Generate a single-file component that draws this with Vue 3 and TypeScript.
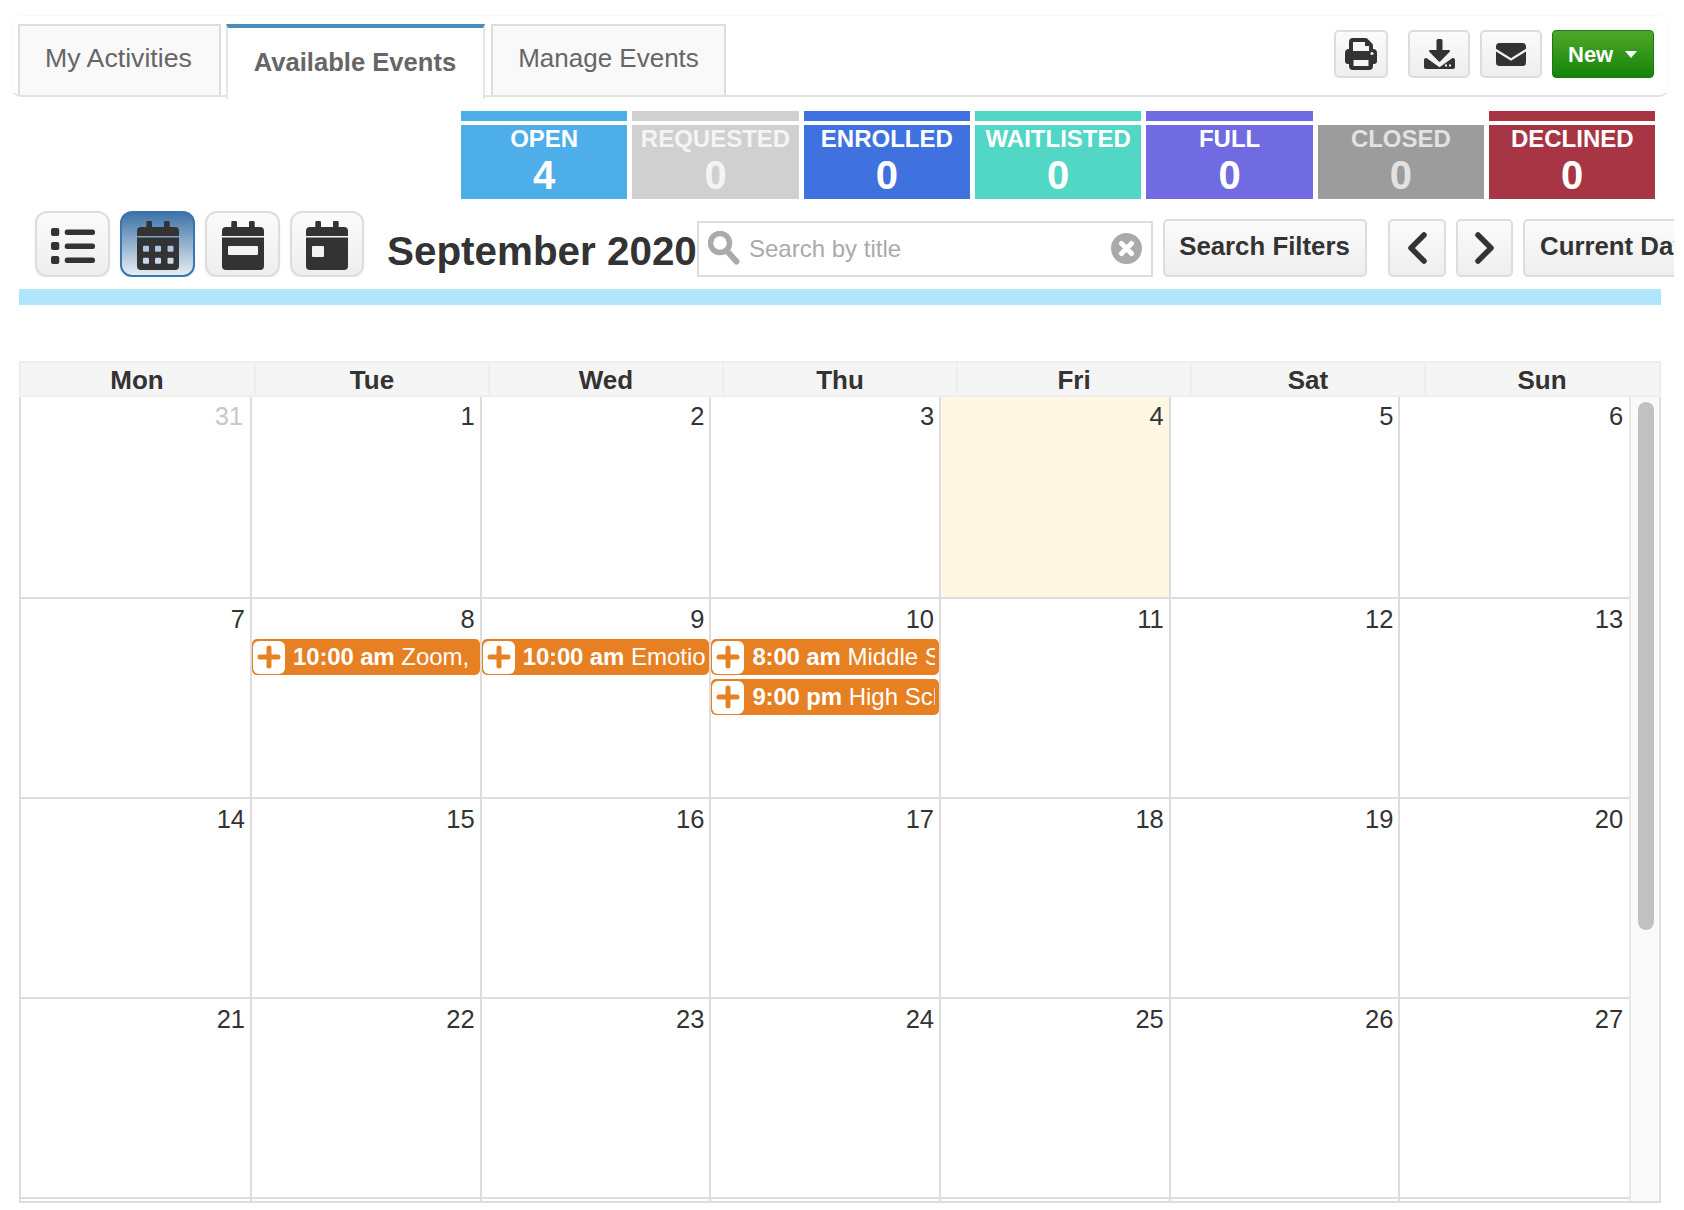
<script setup lang="ts">
interface Tile { label: string; count: number; color: string; strip: string; text: string }
interface Ev { time: string; title: string }
interface Cell { day: number; muted?: boolean; today?: boolean; events?: Ev[] }

const tiles: Tile[] = [
  { label: 'OPEN', count: 4, color: '#4daeea', strip: '#4daeea', text: '#ffffff' },
  { label: 'REQUESTED', count: 0, color: '#d0d0d0', strip: '#d0d0d0', text: '#f4f4f4' },
  { label: 'ENROLLED', count: 0, color: '#3f72de', strip: '#3f72de', text: '#ffffff' },
  { label: 'WAITLISTED', count: 0, color: '#52d6c6', strip: '#52d6c6', text: '#ffffff' },
  { label: 'FULL', count: 0, color: '#706be0', strip: '#706be0', text: '#ffffff' },
  { label: 'CLOSED', count: 0, color: '#9c9c9c', strip: '#ffffff', text: '#e2e2e2' },
  { label: 'DECLINED', count: 0, color: '#a73543', strip: '#a73543', text: '#ffffff' },
]

const dayNames = ['Mon', 'Tue', 'Wed', 'Thu', 'Fri', 'Sat', 'Sun']

const eventsByDay: Record<number, Ev[]> = {
  8: [{ time: '10:00 am', title: 'Zoom,' }],
  9: [{ time: '10:00 am', title: 'Emotional Health' }],
  10: [
    { time: '8:00 am', title: 'Middle School' },
    { time: '9:00 pm', title: 'High School' },
  ],
}

const cells: Cell[] = [{ day: 31, muted: true }]
for (let d = 1; d <= 30; d++) {
  cells.push({ day: d, today: d === 4, events: eventsByDay[d] })
}
for (let d = 1; d <= 4; d++) {
  cells.push({ day: d, muted: true })
}
const weeks: Cell[][] = []
for (let i = 0; i < 35; i += 7) weeks.push(cells.slice(i, i + 7))
</script>

<template>
  <div class="page">
    <header class="tabbar">
      <nav class="tabs">
        <div class="tab tab-first">My Activities</div>
        <div class="tab tab-active">Available Events</div>
        <div class="tab tab-last">Manage Events</div>
      </nav>
      <div class="actions">
        <button class="btn act act-print" aria-label="Print">
          <svg width="32" height="32" viewBox="0 0 32 32">
            <path fill="#333" d="M8 0h12.500a3 3 0 0 1 2 .8l4.600 4.600a3 3 0 0 1 .9 2.100V11a4 4 0 0 1 4 4v8a3 3 0 0 1-3 3h-1v2a4 4 0 0 1-4 4H8a4 4 0 0 1-4-4v-2H3a3 3 0 0 1-3-3v-8a4 4 0 0 1 4-4V4a4 4 0 0 1 4-4z"/>
            <path fill="#f6f6f6" d="M8 4h12v4h4v5H8zM8.500 22h15v6h-15z"/>
            <circle cx="27" cy="15.500" r="1.600" fill="#f6f6f6"/>
          </svg>
        </button>
        <button class="btn act act-down" aria-label="Download">
          <svg width="31" height="30" viewBox="0 0 31 30">
            <rect x="0" y="19" width="31" height="11" rx="2" fill="#333"/>
            <path d="M2 17.500 15.500 27 29 17.500" fill="#f4f4f4" stroke="#f4f4f4" stroke-width="2"/>
            <path fill="#333" d="M12.500 1.500A1.500 1.500 0 0 1 14 0h3a1.500 1.500 0 0 1 1.500 1.500V11H25a1 1 0 0 1 .7 1.700l-9.500 9.800a1 1 0 0 1-1.400 0l-9.500-9.800A1 1 0 0 1 6 11h6.500z"/>
            <rect x="21" y="25.500" width="2" height="2" fill="#f4f4f4"/>
            <rect x="25" y="25.500" width="2" height="2" fill="#f4f4f4"/>
          </svg>
        </button>
        <button class="btn act act-mail" aria-label="Email">
          <svg width="30" height="23" viewBox="0 0 30 23">
            <rect width="30" height="23" rx="3.500" fill="#333"/>
            <path d="M-1 6.500 15 16.500 31 6.500" fill="none" stroke="#f4f4f4" stroke-width="2.200"/>
          </svg>
        </button>
        <button class="btn-new"><span class="new-label">New</span><span class="caret"></span></button>
      </div>
    </header>

    <section class="statuses">
      <div v-for="t in tiles" :key="t.label" class="tile">
        <div class="strip" :style="{ background: t.strip }"></div>
        <div class="tile-body" :style="{ background: t.color, color: t.text }">
          <div class="tile-label">{{ t.label }}</div>
          <div class="tile-count">{{ t.count }}</div>
        </div>
      </div>
    </section>

    <section class="toolbar">
      <button class="btn view" aria-label="List">
        <svg width="44" height="36" viewBox="0 0 44 36" fill="#333">
          <rect width="8.300" height="8" rx="2"/><rect y="14" width="8.300" height="8" rx="2"/><rect y="28" width="8.300" height="8" rx="2"/>
          <rect x="13.700" y="1.500" width="30.300" height="5.500" rx="2.500"/><rect x="13.700" y="15.500" width="30.300" height="5.500" rx="2.500"/><rect x="13.700" y="29.500" width="30.300" height="5.500" rx="2.500"/>
        </svg>
      </button>
      <button class="btn view view-on" aria-label="Month">
        <svg width="42" height="49" viewBox="0 0 42 49" fill="#333">
          <path d="M9.300 6V2a2.800 2.800 0 0 1 5.700 0v4h12V2a2.800 2.800 0 0 1 5.700 0v4H38a4 4 0 0 1 4 4v5H0v-5a4 4 0 0 1 4-4z"/>
          <path d="M0 16.500h42V45a4 4 0 0 1-4 4H4a4 4 0 0 1-4-4z"/>
          <g fill="#a9c6e2">
            <rect x="6" y="24.700" width="6" height="6" rx="1"/><rect x="18" y="24.700" width="6" height="6" rx="1"/><rect x="30.500" y="24.700" width="6" height="6" rx="1"/>
          </g>
          <g fill="#c9d9ea">
            <rect x="6" y="36.700" width="6" height="6" rx="1"/><rect x="18" y="36.700" width="6" height="6" rx="1"/><rect x="30.500" y="36.700" width="6" height="6" rx="1"/>
          </g>
        </svg>
      </button>
      <button class="btn view" aria-label="Week">
        <svg width="42" height="49" viewBox="0 0 42 49" fill="#333">
          <path d="M9.300 6V2a2.800 2.800 0 0 1 5.700 0v4h12V2a2.800 2.800 0 0 1 5.700 0v4H38a4 4 0 0 1 4 4v5H0v-5a4 4 0 0 1 4-4z"/>
          <path d="M0 16.500h42V45a4 4 0 0 1-4 4H4a4 4 0 0 1-4-4z"/>
          <rect x="6" y="25" width="30" height="9" rx="1" fill="#f3f3f3"/>
        </svg>
      </button>
      <button class="btn view view-last" aria-label="Day">
        <svg width="42" height="49" viewBox="0 0 42 49" fill="#333">
          <path d="M9.300 6V2a2.800 2.800 0 0 1 5.700 0v4h12V2a2.800 2.800 0 0 1 5.700 0v4H38a4 4 0 0 1 4 4v5H0v-5a4 4 0 0 1 4-4z"/>
          <path d="M0 16.500h42V45a4 4 0 0 1-4 4H4a4 4 0 0 1-4-4z"/>
          <rect x="6" y="25" width="12" height="11" rx="1" fill="#f3f3f3"/>
        </svg>
      </button>
      <h1 class="title">September 2020</h1>
      <div class="search">
        <svg class="search-icon" width="32" height="34" viewBox="0 0 32 34">
          <circle cx="12" cy="12" r="9.500" fill="none" stroke="#aaa" stroke-width="5.500"/>
          <path d="M19 20 28.500 30.500" stroke="#aaa" stroke-width="6" stroke-linecap="round"/>
        </svg>
        <span class="placeholder">Search by title</span>
        <svg class="clear" width="31" height="31" viewBox="0 0 31 31">
          <circle cx="15.500" cy="15.500" r="15.500" fill="#aaa"/>
          <path d="M10.500 10.500 20.500 20.500M20.500 10.500 10.500 20.500" stroke="#fff" stroke-width="5" stroke-linecap="round"/>
        </svg>
      </div>
      <button class="btn text-btn filters"><span class="lift">Search Filters</span></button>
      <button class="btn nav nav-prev" aria-label="Previous">
        <svg width="22" height="32" viewBox="0 0 22 32"><path d="M18 3 5 16l13 13" fill="none" stroke="#333" stroke-width="5.500" stroke-linecap="round" stroke-linejoin="round"/></svg>
      </button>
      <button class="btn nav nav-next" aria-label="Next">
        <svg width="22" height="32" viewBox="0 0 22 32"><path d="M4 3l13 13L4 29" fill="none" stroke="#333" stroke-width="5.500" stroke-linecap="round" stroke-linejoin="round"/></svg>
      </button>
      <button class="btn text-btn current"><span class="lift">Current Day</span></button>
    </section>

    <div class="bluebar"></div>

    <section class="calendar">
      <div class="dayhead">
        <div v-for="n in dayNames" :key="n" class="dayname">{{ n }}</div>
      </div>
      <div class="calbody">
        <div class="weeks">
          <div v-for="(w, i) in weeks" :key="i" class="week">
            <div v-for="c in w" :key="c.day + (c.muted ? 'm' : '')" class="cell" :class="{ today: c.today }">
              <div class="num" :class="{ muted: c.muted }">{{ c.day }}</div>
              <div v-for="e in c.events" :key="e.time" class="event">
                <span class="plus">
                  <svg width="24" height="24" viewBox="0 0 24 24"><path d="M12 3v18M3 12h18" stroke="#e78022" stroke-width="5" stroke-linecap="round"/></svg>
                </span>
                <span class="ev-text"><b class="ev-time">{{ e.time }}</b> {{ e.title }}</span>
              </div>
            </div>
          </div>
        </div>
        <div class="track"><div class="thumb"></div></div>
      </div>
    </section>
  </div>
</template>

<style>
html, body { background: #fff; margin: 0; }
</style>

<style scoped>
.page {
  width: 1684px;
  height: 1210px;
  overflow: hidden;
  background: #fff;
  font-family: "Liberation Sans", Arial, sans-serif;
  color: #333;
}
button { font-family: inherit; padding: 0; cursor: pointer; }

.tabbar {
  box-sizing: border-box;
  width: 1658px;
  height: 82px;
  margin: 15px 0 0 11px;
  padding: 8px 0 0 6px;
  display: flex;
  border: 1px solid #f9f9f9;
  border-bottom: 2px solid #e3e3e3;
  border-radius: 10px;
}
.tabs { display: flex; align-items: flex-start; }
.tab {
  box-sizing: border-box;
  height: 71px;
  border: 2px solid #ddd;
  border-bottom: 0;
  background: #f9f9f9;
  color: #666;
  font-size: 26.700px;
  line-height: 64px;
  text-align: center;
}
.tab-first { width: 203px; margin-right: 7px; padding-right: 2px; }
.tab-active {
  width: 259px;
  height: 75px;
  margin-right: 6px;
  background: #fff;
  border: 0;
  border-top: 4px solid #4a8db8;
  border-left: 2px solid #e6e6e6;
  border-right: 2px solid #e6e6e6;
  margin-left: -2px;
  font-size: 25.600px;
  font-weight: 700;
  line-height: 68px;
  padding-right: 1px;
}
.tab-last { width: 235px; font-size: 26px; }

.btn {
  box-sizing: border-box;
  border: 2px solid #ddd;
  border-radius: 5px;
  background: linear-gradient(#fbfbfb, #eeeeee);
  display: flex;
  align-items: center;
  justify-content: center;
  color: #333;
}
.actions { margin-left: auto; padding: 6px 14px 0 0; display: flex; align-items: flex-start; }
.act { height: 48px; }
.act-print { width: 54px; margin-right: 20px; }
.act-down { width: 62px; margin-right: 10px; }
.act-mail { width: 62px; margin-right: 10px; }
.btn-new {
  box-sizing: border-box;
  width: 102px;
  height: 48px;
  border: 1px solid #197c12;
  border-radius: 4px;
  background: linear-gradient(#4fa828, #148409);
  color: #fff;
  font-size: 22px;
  font-weight: 700;
  display: flex;
  align-items: center;
  padding-left: 15px;
}
.new-label { margin-top: 2px; }
.caret {
  width: 0;
  height: 0;
  margin-left: 12px;
  border-left: 6.500px solid transparent;
  border-right: 6.500px solid transparent;
  border-top: 7px solid #fff;
}

.statuses { display: flex; gap: 5px; margin: 14px 0 0 461px; }
.tile { width: 166.350px; }
.strip { height: 10px; margin-bottom: 4px; }
.tile-body { height: 74px; text-align: center; font-weight: 700; overflow: hidden; }
.tile-label { font-size: 24px; line-height: 28px; white-space: nowrap; }
.tile-count { font-size: 40px; line-height: 42px; margin-top: 1px; }

.toolbar {
  width: 1674px;
  height: 66px;
  margin-top: 12px;
  padding-left: 35px;
  box-sizing: border-box;
  display: flex;
  align-items: flex-end;
  overflow: hidden;
}
.view {
  flex: none;
  width: 75px;
  height: 66px;
  margin-right: 10px;
  border-radius: 12px;
  box-shadow: 0 1px 2px rgba(0,0,0,.08);
}
.view svg { margin-top: 3px; }
.view-on {
  border-color: #3a75ad;
  background: linear-gradient(#3e74a9, #e7edf3);
}
.view-last { width: 74px; margin-right: 23px; }
.title {
  flex: none;
  width: 310px;
  margin: 0 0 3px;
  font-size: 40.400px;
  font-weight: 700;
  line-height: 46px;
  color: #333;
  white-space: nowrap;
}
.search {
  flex: none;
  box-sizing: border-box;
  width: 456px;
  height: 56px;
  margin-right: 10px;
  border: 2px solid #ddd;
  display: flex;
  align-items: center;
  padding: 0 9px 0 9px;
  background: #fff;
}
.search-icon { flex: none; margin: -3px 7px 0 0; }
.placeholder { flex: 1; font-size: 24px; color: #aaa; padding-left: 2px; }
.clear { flex: none; margin: -2px 0 0; }
.text-btn { flex: none; height: 58px; font-size: 25.800px; font-weight: 700; }
.lift { margin-top: -3px; }
.filters { width: 204px; margin-right: 21px; }
.filters .lift { margin-left: -1px; }
.nav { flex: none; width: 58px; height: 58px; }
.nav-prev { margin-right: 10px; }
.nav-next { width: 57px; margin-right: 10px; }
.current { width: 190px; justify-content: flex-start; padding-left: 15px; white-space: nowrap; }

.bluebar { width: 1642px; height: 16px; margin: 12px 0 0 19px; background: #b0e5fb; }

.calendar { width: 1642px; margin: 56px 0 0 19px; }
.dayhead {
  box-sizing: border-box;
  height: 36px;
  display: grid;
  grid-template-columns: repeat(7, 234px);
  background: #f5f5f5;
  border: 2px solid #eeeeee;
}
.dayname {
  box-sizing: border-box;
  border-left: 2px solid #eeeeee;
  text-align: center;
  font-size: 26px;
  font-weight: 700;
  line-height: 34px;
  color: #333;
  height: 32px;
  position: relative;
  left: -1px;
}
.dayname:first-child { border-left: 0; }
.calbody {
  display: flex;
  height: 804px;
  border-bottom: 2px solid #ddd;
  border-right: 2px solid #e0e0e0;
  overflow: hidden;
}
.weeks { width: 1610px; flex: none; }
.week {
  display: grid;
  grid-template-columns: 231px repeat(6, 229.700px);
  height: 200px;
  border-bottom: 2px solid #ddd;
  box-sizing: border-box;
  overflow: hidden;
}
.week:first-child { height: 202px; }
.cell { box-sizing: border-box; border-left: 2px solid #ddd; min-width: 0; }
.cell.today { background: #fef7e3; }
.num {
  font-size: 25.500px;
  line-height: 24px;
  text-align: right;
  padding: 8px 5px 0 0;
  height: 40px;
  box-sizing: border-box;
  color: #333;
}
.week:first-child .num { padding-top: 7px; height: 39px; }
.num.muted { color: #c8c8c8; }
.week:first-child .num.muted { padding-right: 7px; }
.event {
  box-sizing: border-box;
  height: 36px;
  margin-bottom: 4px;
  display: flex;
  align-items: center;
  background: #e78022;
  border-radius: 5px;
  padding: 0 4px 0 1px;
  color: #fff;
  font-size: 24px;
  overflow: hidden;
}
.plus {
  flex: none;
  width: 32px;
  height: 33px;
  margin-right: 8px;
  background: #fff;
  border-radius: 6px;
  display: flex;
  align-items: center;
  justify-content: center;
}
.ev-text { flex: 1; min-width: 0; overflow: hidden; white-space: nowrap; }
.ev-time { letter-spacing: -0.15px; }
.track {
  flex: 1;
  box-sizing: border-box;
  background: #fafafa;
  border-left: 2px solid #e8e8e8;
}
.thumb {
  width: 16px;
  height: 528px;
  margin: 5px 0 0 7px;
  background: #c1c1c1;
  border-radius: 8px;
}
</style>
